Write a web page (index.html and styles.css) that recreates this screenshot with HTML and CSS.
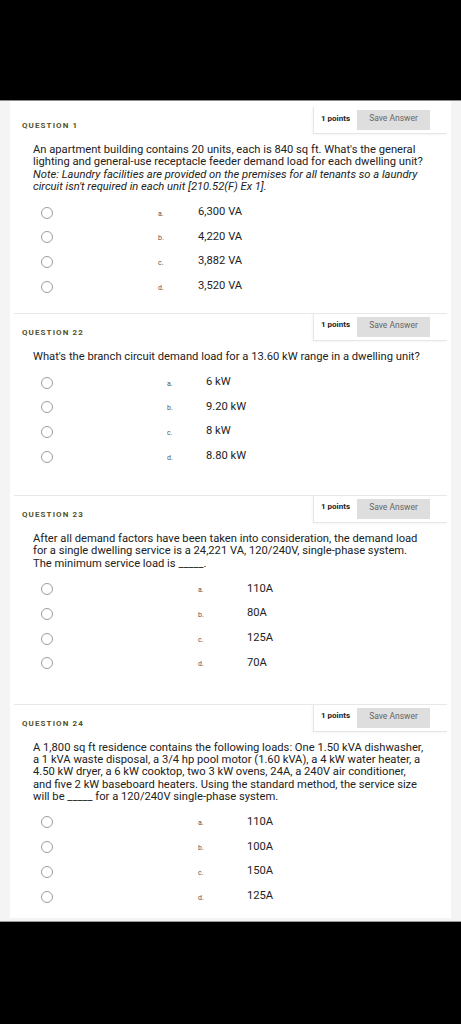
FILE: index.html
```html
<!DOCTYPE html>
<html>
<head>
<meta charset="utf-8">
<link rel="stylesheet" href="styles.css">
</head>
<body>
<div class="topbar"></div>
<main class="page">
  <div class="card">
    <section class="question first">
      <div class="qhead">
        <h3 class="qlabel">QUESTION 1</h3>
        <div class="points"><span class="pts">1 points</span><button class="save">Save Answer</button></div>
      </div>
      <div class="qtext">An apartment building contains 20 units, each is 840 sq ft. What's the general lighting and general-use receptacle feeder demand load for each dwelling unit? <em>Note: Laundry facilities are provided on the premises for all tenants so a laundry circuit isn't required in each unit [210.52(F) Ex 1].</em></div>
      <ul class="opts w1">
        <li><span class="radio"></span><span class="let">a.</span><span class="val">6,300 VA</span></li>
        <li><span class="radio"></span><span class="let">b.</span><span class="val">4,220 VA</span></li>
        <li><span class="radio"></span><span class="let">c.</span><span class="val">3,882 VA</span></li>
        <li><span class="radio"></span><span class="let">d.</span><span class="val">3,520 VA</span></li>
      </ul>
    </section>
    <section class="question q22">
      <div class="qhead">
        <h3 class="qlabel">QUESTION 22</h3>
        <div class="points"><span class="pts">1 points</span><button class="save">Save Answer</button></div>
      </div>
      <div class="qtext">What's the branch circuit demand load for a 13.60 kW range in a dwelling unit?</div>
      <ul class="opts w2">
        <li><span class="radio"></span><span class="let">a.</span><span class="val">6 kW</span></li>
        <li><span class="radio"></span><span class="let">b.</span><span class="val">9.20 kW</span></li>
        <li><span class="radio"></span><span class="let">c.</span><span class="val">8 kW</span></li>
        <li><span class="radio"></span><span class="let">d.</span><span class="val">8.80 kW</span></li>
      </ul>
    </section>
    <section class="question q23">
      <div class="qhead">
        <h3 class="qlabel">QUESTION 23</h3>
        <div class="points"><span class="pts">1 points</span><button class="save">Save Answer</button></div>
      </div>
      <div class="qtext">After all demand factors have been taken into consideration, the demand load for a single dwelling service is a 24,221 VA, 120/240V, single-phase system. The minimum service load is _____.</div>
      <ul class="opts w3">
        <li><span class="radio"></span><span class="let">a.</span><span class="val">110A</span></li>
        <li><span class="radio"></span><span class="let">b.</span><span class="val">80A</span></li>
        <li><span class="radio"></span><span class="let">c.</span><span class="val">125A</span></li>
        <li><span class="radio"></span><span class="let">d.</span><span class="val">70A</span></li>
      </ul>
    </section>
    <section class="question last">
      <div class="qhead">
        <h3 class="qlabel">QUESTION 24</h3>
        <div class="points"><span class="pts">1 points</span><button class="save">Save Answer</button></div>
      </div>
      <div class="qtext">A 1,800 sq ft residence contains the following loads: One 1.50 kVA dishwasher, a 1 kVA waste disposal, a 3/4 hp pool motor (1.60 kVA), a 4 kW water heater, a 4.50 kW dryer, a 6 kW cooktop, two 3 kW ovens, 24A, a 240V air conditioner, and five 2 kW baseboard heaters. Using the standard method, the service size will be _____ for a 120/240V single-phase system.</div>
      <ul class="opts w3">
        <li><span class="radio"></span><span class="let">a.</span><span class="val">110A</span></li>
        <li><span class="radio"></span><span class="let">b.</span><span class="val">100A</span></li>
        <li><span class="radio"></span><span class="let">c.</span><span class="val">150A</span></li>
        <li><span class="radio"></span><span class="let">d.</span><span class="val">125A</span></li>
      </ul>
    </section>
  </div>
</main>
<div class="bottombar"></div>
</body>
</html>
```
FILE: styles.css
```css
* { box-sizing: border-box; }
html, body { margin: 0; padding: 0; }
body {
  background: #000;
  font-family: Roboto, "Liberation Sans", sans-serif;
  color: #222;
  width: 461px;
  height: 1024px;
  overflow: hidden;
}
.topbar {
  height: 101px;
  background: #000;
  border-bottom: 1px solid #8a8a8a;
}
.page {
  background: #f4f4f4;
  padding: 0 10px 3px;
  border-bottom: 1px solid #9a9a9a;
}
.card {
  background: #fff;
  padding: 0 4px;
}
.question {
  border-top: 1px solid #e8e8e8;
  padding-bottom: 26px;
}
.question.first {
  border-top-color: #fff;
  padding-top: 5px;
  padding-bottom: 14px;
}
.question.q23 { padding-bottom: 28px; }
.question.last { padding-bottom: 9px; }
.qhead {
  display: flex;
  justify-content: space-between;
  align-items: flex-start;
}
.qlabel {
  margin: 14px 0 0 8px;
  font-size: 8px;
  line-height: 10px;
  font-weight: 700;
  letter-spacing: 1.1px;
  color: #525228;
}
.points {
  width: 134px;
  display: flex;
  align-items: center;
  padding: 3px 17px 3px 7px;
  border-left: 1px solid #e6e6e6;
  border-bottom: 1px solid #e6e6e6;
  box-shadow: -1px 1px 2px rgba(0,0,0,0.04);
}
.pts {
  font-size: 8px;
  font-weight: 700;
  color: #222;
  width: 36px;
  margin-top: -4px;
}
.save {
  margin: 0;
  width: 73px;
  height: 20px;
  border: none;
  background: #dedede;
  color: #666;
  font-family: Roboto, "Liberation Sans", sans-serif;
  font-size: 8.5px;
  padding: 0 0 4px;
}
.qtext {
  margin: 10px 23px 0 19px;
  font-size: 11.2px;
  line-height: 12.3px;
  color: #222;
}
.qtext em { font-style: italic; }
.opts {
  list-style: none;
  margin: 7px 0 0;
  padding: 0;
}
.opts li {
  display: grid;
  align-items: center;
  height: 24.7px;
}
.opts.w1 li { grid-template-columns: 144px 40px auto; }
.opts.w2 li { grid-template-columns: 153px 39px auto; }
.opts.w3 li { grid-template-columns: 184px 49px auto; }
.radio {
  width: 12px;
  height: 12px;
  margin-left: 27px;
  border: 1px solid #9d9d9d;
  border-radius: 50%;
  background: #fff;
}
.let {
  font-size: 7px;
  color: #555;
  padding-top: 2px;
}
.val {
  font-size: 11.2px;
  color: #222;
  margin-top: -2px;
}
.bottombar {
  background: #000;
}
```
